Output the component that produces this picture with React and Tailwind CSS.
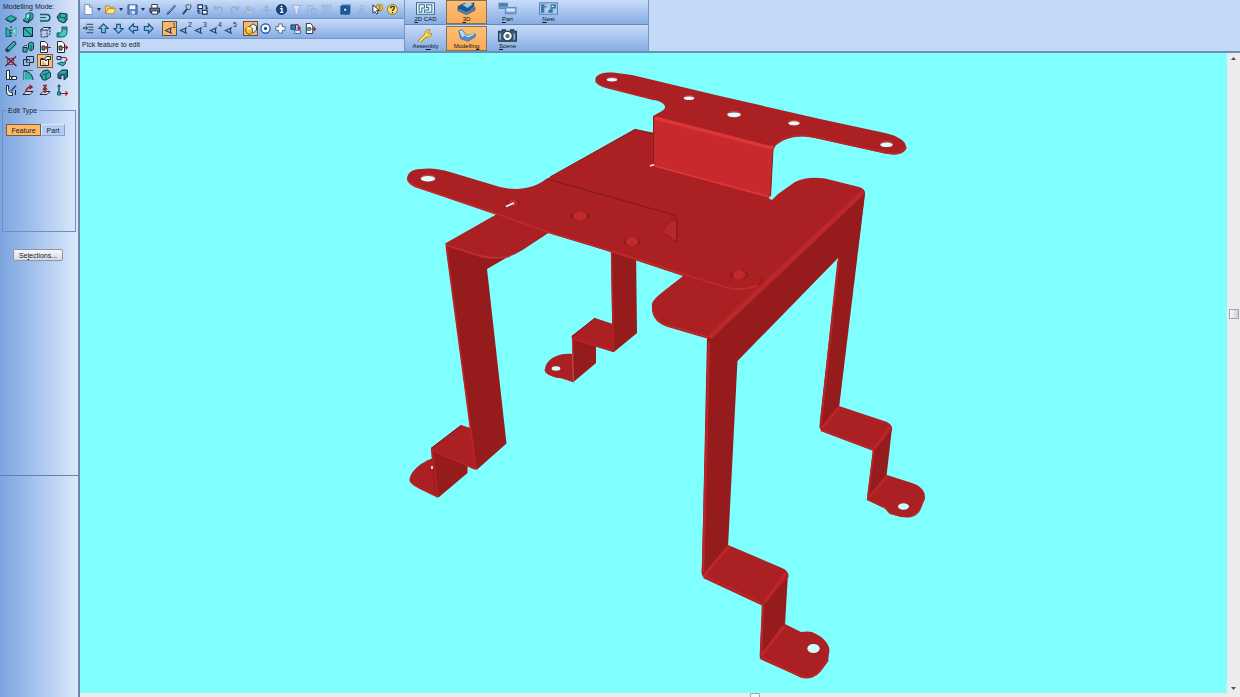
import React from "react";

const T = "#2fb3a8";
const TD = "#0d5f66";
const K = "#1d2b3a";
const R = "#a3162b";

function Icon({ children, className = "w-3 h-3" }) {
  return (
    <svg viewBox="0 0 12 12" className={className + " shrink-0"} fill="none" aria-hidden="true">
      {children}
    </svg>
  );
}

/* ---------- modelling mode palette ---------- */
const modes = [
  ["Flat plate", <><path d="M0.5 6.5 6 3.5l5.5 2.5L6 9.5z" fill={T} stroke={TD} /><path d="M.5 7.5 6 10.5l5.5-3.5" stroke={K} /></>],
  ["Plate with flange", <><path d="M1 8 4 6V2l4-1.500L11 2v4L6 10z" fill={T} stroke={TD} /><path d="M4.500 2.500 8 1.500v4L4.500 6z" fill="#8ee6dc" /><path d="M8 1.500v4.500l-2 3M1 8.500 6 11l5-4.500" stroke={K} /></>],
  ["Hem", <><path d="M1 2.500h6.500c4.500 0 4.500 6.500 0 6.500H1" stroke={TD} strokeWidth="1.600" /><path d="M1 5.500h6" stroke={TD} /><path d="M1 7.500h7" stroke="#6fd6cb" /></>],
  ["Box", <><path d="M1 5 4 1l7 1v6l-3 3-5-2z" fill={T} stroke={K} /><path d="M4 1v4l5 1 2-4M9 6v5M1 5l3 1" stroke={TD} /></>],
  ["Mirror", <><path d="M1 1.500 5 5v5.500H1z" fill={T} stroke={TD} /><path d="M6 0v12" stroke={K} strokeDasharray="2 1" /><path d="M11 1.500 7 5l4 5.500z" fill="#9be0da" stroke={T} /></>],
  ["Diagonal bend", <><path d="M1.500 1.500h9v9h-9z" fill={T} stroke={K} /><path d="m1.500 1.500 9 9" stroke={K} /></>],
  ["Wire box", <><path d="M2 4.500V11h6V4.500M8 11l3-3V1.500" stroke={K} strokeDasharray="2 1" /><path d="m1.500 4 3-2.500h7L8.500 4z" fill="#d7f4f0" stroke={K} /></>],
  ["Curved duct", <><path d="M6 1h5v5c0 3-2 5-5 5H1V7h2c2 0 3-1 3-3z" fill="#44c9bf" stroke={TD} /><path d="M6 1.500 7.500 3H11M1 7l2 1v3" stroke={TD} /></>],
  ["Tube", <><path d="m2.500 9 6.500-6.500" stroke={K} strokeWidth="4.500" strokeLinecap="round" /><path d="m2.500 9 6.500-6.500" stroke={T} strokeWidth="3" strokeLinecap="round" /><circle cx="2.500" cy="9" r="1.200" fill={K} /></>],
  ["Join parts", <><path d="M1 6.500h4V11H1z" fill={T} stroke={K} /><path d="M6.500 2.500 9 1l2.500 1v6L9 10 6.500 8z" fill={T} stroke={K} /><path d="m1 6.500 1.500-2H5M9 4v6" stroke={TD} /></>],
  ["Import part", <><path d="M1.500.500H6L8.500 3v8.500h-7z" fill="#fff" stroke={K} /><path d="M3 5h3v4H3z" fill="#5e9c57" stroke={K} /><path d="M12 6.500H7M9 4.500 7 6.500l2 2" stroke={R} strokeWidth="1.200" /></>],
  ["Export part", <><path d="M1.500.500H6L8.500 3v8.500h-7z" fill="#fff" stroke={K} /><path d="M3 5h3v4H3z" fill="#5e9c57" stroke={K} /><path d="M6.500 6.500h5M9.500 4.500l2 2-2 2" stroke={R} strokeWidth="1.200" /></>],
  ["Delete", <><path d="M2.500 3.500h6v6h-6z" stroke="#4c5f72" /><path d="m.500 1.500 11 9.500M11 1.500.500 11" stroke="#8f1223" strokeWidth="1.500" /></>],
  ["Copy", <><path d="M4.500 1.500h7v6h-7z" stroke={K} /><path d="M1.500 4.500h6v6h-6z" stroke={K} /><path d="M5 5h2.500v2.500H5z" fill="#d8e7fb" stroke="#4a617a" /></>],
  ["Edit feature", <><path d="M1.500 4.500h8v6h-8z" fill="#fff3d4" stroke={K} /><path d="M1.500 3.500h3" stroke={K} /><path d="M5.500 4 7.500 1.500h4v3H8L7 6z" fill="#e8edf2" stroke={K} /><path d="M3 7h2M3 9h4" stroke="#a37a3d" /></>],
  ["Rotate feature", <><path d="M4 2.500h4.500c3 0 3 4 0 4" stroke={R} strokeWidth="1.200" /><path d="M1 1.500h4v3H1z" stroke={K} /><path d="M1.500 8.500 5 7l5 1-3 3z" fill={T} stroke={TD} /></>],
  ["Align", <><path d="M1.500 1.500h3v9h-3z" fill="#fff" stroke={K} /><path d="M4.500 7.500h2v3h-2zM7 7.500h4.500v3H7z" fill="#fff" stroke={K} /></>],
  ["Corner round", <><path d="M2.500 2.500c5 0 8 3 8 8h-8z" fill={T} /><path d="M1.500 11V1.500H11" stroke="#49738e" /><path d="M2 2c5.500.500 8.500 4 9 9" stroke={K} /></>],
  ["Solid", <><path d="m1 6 3-4 5-1 2.500 3v4L7 11H4z" fill={T} stroke={K} /><path d="M4 6 9 4l2-1M7 5v6M1 6l3 2" stroke={TD} strokeWidth="1.300" /></>],
  ["Shell", <><path d="M2 4.500 6 1h5.500v7L8 11V6H5v4L2 9z" fill="#187e7e" stroke={K} /><path d="M2.500 4.500 6 2h5L8 4.500z" fill={T} /></>],
  ["Sketch", <><path d="M1.500 1.500h2v4c0 2 1 3 4 3v3H5c-2.500 0-3.500-2-3.500-4z" fill="#e9f2ff" stroke={K} /><path d="m6 7 5-5.500" stroke="#2b4f96" strokeWidth="1.800" /><path d="M10.500 6v5" stroke={K} /></>],
  ["Bend up", <><path d="M1 10.500 4 7.500h7L8 10.500z" fill="#e7d5d8" stroke={K} /><path d="M4 8C4 4.500 6 3 9.500 3M7.500 1l2.500 2-2.500 2" stroke={R} strokeWidth="1.500" /></>],
  ["Push feature", <><path d="M1 10.500 4 7.500h7L8 10.500z" fill="#e7d5d8" stroke={K} /><path d="M6 9V2M4 6l2-3 2 3M4 1.500h4" stroke="#8d2a28" strokeWidth="1.500" /></>],
  ["Set origin", <><path d="M3 1v8" stroke={TD} strokeWidth="1.500" /><path d="m1.500 3 1.500-2.500L4.500 3" stroke={TD} /><path d="M5 9.500h6M9.500 7.500l2 2-2 2" stroke={R} strokeWidth="1.200" /><path d="M1.500 8h3v3h-3z" fill={T} stroke={TD} /></>],
];

/* ---------- toolbar glyphs ---------- */
const faded = "#9aafcf";
const g = {
  newFile: <><path d="M2 .500h5L10 3.500v8H2z" fill="#fff" stroke="#6f8cb8" /><path d="M7 .500v3h3" stroke="#6f8cb8" /></>,
  open: <><path d="M.500 10.500V2h3.500l1 1.500h4V5" fill="#f6d55b" stroke="#b98d20" /><path d="m1 10.500 2-5.500h8.500l-2 5.500z" fill="#ffe680" stroke="#b98d20" /></>,
  save: <><path d="M1 1h10v10H1z" fill="#5d86c6" stroke="#3c609c" /><path d="M3 1.500h6v4H3z" fill="#eef5ff" /><path d="M3.500 7.500h5V11h-5z" fill="#d6e4f6" /><path d="M4.500 8v2.500" stroke="#27508b" /></>,
  print: <><path d="M3 4V.500h6V4" fill="#fff" stroke={K} /><path d="M1 4.500h10.500V9H1z" fill="#69778b" stroke={K} /><path d="M3 7.500h6.500V11H3z" fill="#fff" stroke={K} /></>,
  pencil: <><path d="m2 10.500 8-9" stroke="#234c8c" strokeWidth="2.400" /><path d="m2.500 9.500 7-8" stroke="#a9cbf1" /><path d="m1 11.500 2-1.500" stroke={K} /></>,
  tools: <><path d="m2 11 5-6" stroke="#26426b" strokeWidth="2" /><path d="M5 2l2-1.500h3L11 3 9.500 6H7z" fill="#b8cee9" stroke="#2d4c76" /><path d="M7 3 9.500.500" stroke="#e6b63a" strokeWidth="1.500" /></>,
  convert: <><path d="M1 1h5v4H1zM6 7h5v4H6z" fill="#fff" stroke="#1c3158" strokeWidth="1.300" /><path d="M8 2h2.500v3M9 4l1.500 1.500L12 4M4 10H1.500V7M0 8l1.500-1.500L3 8" stroke="#264d84" strokeWidth="1.200" /></>,
  undo: <path d="M2 2v4h4M2.500 5.500C5 2 10 3 10 7c0 2-1 3.500-3 4" stroke={faded} strokeWidth="1.900" />,
  redo: <path d="M10 2v4H6M9.500 5.500C7 2 2 3 2 7c0 2 1 3.500 3 4" stroke={faded} strokeWidth="1.900" />,
  hand: <><path d="M3 11 1.500 7l2-1L3 3l2-.500L8 5l2.500 1-1 5z" fill="#afc1dc" stroke={faded} /><path d="M4 5l3 3" stroke="#7e93b6" /></>,
  move: <><path d="M6 1v10M1 7h10" stroke={faded} strokeWidth="1.500" /><path d="m3.500 4 2.500-3 2.500 3z" fill={faded} /></>,
  info: <><circle cx="6" cy="6" r="5.500" fill="#1a477e" stroke="#102f58" /><path d="M4.500 5H6.500v4M4.500 9.200h3.500" stroke="#fff" strokeWidth="1.500" /><circle cx="6" cy="2.700" r="1" fill="#fff" /></>,
  filter: <><path d="M1 1.500h10L7.500 6v5h-3V6z" fill="#dce7f7" stroke={faded} /></>,
  flag: <><path d="M2 1v10M2 2h6v4H2M6 5h5v5H6z" stroke={faded} /></>,
  rows: <path d="M1 1.500h10v2H1zM1 5.500h10M1 8.500h10v2H1z" stroke={faded} />,
  cube: <><path d="M1 2h9.500v9H1z" fill="#1f62a5" stroke="#173c69" /><path d="M4 4.500h3.500V8H4z" fill="#d9edff" stroke="#0a3262" /><path d="M1 2 3 .500h8.500V9l-1 2" stroke="#5ea1d8" /></>,
  wrenchOff: <><path d="m2 11 4-5 4 5" stroke={faded} strokeWidth="1.700" /><circle cx="6.500" cy="3.500" r="2.200" stroke={faded} /></>,
  cursorHelp: <><circle cx="8" cy="4" r="3.800" fill="#f1cf49" stroke="#a98020" /><path d="M1 1v9l2-2 2 3 1.500-1L5 7h3z" fill="#fff" stroke={K} /><path d="M7 3c1-2 3 0 1.500 1.200V6" stroke="#5e4713" /></>,
  help: <><circle cx="6" cy="6" r="5.500" fill="#ffdf59" stroke="#8c7026" /><path d="M4 4.500C4 2 8.500 2 8 4.500 7.500 6 6 6 6 7.500" stroke={K} strokeWidth="1.400" /><circle cx="6" cy="9.500" r=".900" fill={K} /></>,
  tree: <><path d="M4 1.500h7M6 4.500h5.500M6 7.500h5.500M4 10.500h7" stroke="#46617a" strokeWidth="1.600" /><path d="M0 5.500h5M3 3.500l2 2-2 2" stroke="#2b735b" strokeWidth="1.300" /><path d="M0 5.500h2" stroke={R} strokeWidth="1.300" /></>,
  up: <path d="m6 1 5 5H8v4.500H4V6H1z" fill="#8fc6f3" stroke="#245386" strokeWidth="1.300" />,
  down: <path d="M6 11 1 6h3V1.500h4V6h3z" fill="#8fc6f3" stroke="#245386" strokeWidth="1.300" />,
  left: <path d="m1 6 5-5v3h4.500v4H6v3z" fill="#8fc6f3" stroke="#245386" strokeWidth="1.300" />,
  right: <path d="M11 6 6 1v3H1.500v4H6v3z" fill="#8fc6f3" stroke="#245386" strokeWidth="1.300" />,
  solid: <><path d="M5 3 8 .800 11.500 3v4l-3 3L5 8z" fill="#e8edf2" stroke="#25466c" /><path d="M.800 5.500 4 3.500 7.500 5.500v4L4 11.500.800 9z" fill="#f7bf28" stroke="#7c581b" /><ellipse cx="4" cy="5.500" rx="2.500" ry="1.300" fill="#fff4b2" /></>,
  target: <><circle cx="6" cy="6" r="5" fill="#eff7ff" stroke="#1f4d84" strokeWidth="1.300" /><circle cx="6" cy="6" r="1.800" fill="#225993" /></>,
  cross: <path d="M4 1h4v3h3v4H8v3H4V8H1V4h3z" fill="#f8fbff" stroke="#4f6788" />,
  dxf: <><path d="M1 2h5v5H1z" fill="#317ba8" stroke="#1d3c65" /><path d="M6 1.500c4 0 4 2 4 5M8.500 5 10 7l1.500-2" stroke={R} strokeWidth="1.300" /><path d="M5 8h6.500v3.500H5z" fill="#dceaff" stroke="#3c6291" /></>,
  exportDoc: <><path d="M1.500.500H6L8.500 3v8.500h-7z" fill="#fff" stroke={K} /><path d="M3 5h3v3H3z" fill="#62bd9f" stroke="#286e55" /><path d="M7 6.500h4.500M9.500 4.500l2 2-2 2" stroke={R} strokeWidth="1.200" /></>,
};

function Tool({ name, icon, wide, active }) {
  return (
    <button
      type="button"
      aria-label={name}
      className={
        (wide ? "w-4 " : "w-[15px] ") +
        "flex h-[15px] shrink-0 items-center justify-center " +
        (active ? "border border-[#5a5348] bg-[#f9b767]" : "")
      }
    >
      <Icon className={icon === "solid" ? "h-3 w-3" : "h-[11px] w-[11px]"}>{g[icon]}</Icon>
    </button>
  );
}

function Drop({ name }) {
  return (
    <button type="button" aria-label={name} className="flex h-[15px] w-1.5 shrink-0 items-center justify-center">
      <svg viewBox="0 0 4 3" className="h-[3px] w-1" aria-hidden="true"><path d="M0 0h4L2 3z" fill="#24364f" /></svg>
    </button>
  );
}

function ViewButton({ n }) {
  return (
    <button
      type="button"
      aria-label={"View " + n}
      aria-pressed={n === 1}
      className={
        "relative flex h-[15px] w-[15px] shrink-0 items-center justify-center " +
        (n === 1 ? "border border-[#5a5348] bg-[#f9b767]" : "")
      }
    >
      <svg viewBox="0 0 12 12" className="h-3 w-3" fill="none" aria-hidden="true">
        <path d="M8 4.500 1.500 7.500 8 10.500M6.500 5.500v4" stroke="#25446d" strokeWidth="1.200" />
      </svg>
      <span className="absolute right-0 top-0 text-[7px] leading-[8px] text-[#152a4a]">{n}</span>
    </button>
  );
}

/* ---------- module tabs ---------- */
const m = {
  cad: <><rect x=".500" y=".500" width="17" height="11" fill="#e9f4ff" stroke="#3b7292" /><path d="M3 2.500h5v3H5.500v4H3zM10 2.500h5v7H8v-2h4V5h-2z" stroke="#3b7292" /></>,
  three: <><path d="M1 4 7 1l4 2 5-2.500V4l-7 5-8-3z" fill="#1e5792" stroke="#1e456f" strokeWidth=".700" /><path d="M5 2.500 10 .500l5 1.500-5 3.500z" fill="#9cc7ec" /><path d="M1 5.500 9 9l8-4v2.500L9 11.800 1 8z" fill="#4b8ccc" stroke="#1e456f" strokeWidth=".700" /></>,
  part: <><path d="M1 1h8v4h8v6H7V6H1z" fill="#6d9fd3" stroke="#658bb5" /><path d="M1 1h8v3H1z" fill="#4e7fb5" /><path d="M8 6h8v3H8z" fill="#d4e8fa" /></>,
  nest: <><path d="M.500.500h17v11H.500z" fill="#a8c9ea" stroke="#5d86b4" /><path d="M2 2h5v3H5v5H2zM11 2h5v4h-3v4H9V7h2z" fill="#3f74ab" /><path d="M7 7h2M5 3h2M12 4h2" stroke="#e9f6ff" /></>,
  assembly: <><path d="m4 11 6-6" stroke="#a97d13" strokeWidth="3.500" strokeLinecap="round" /><path d="M9.500 1.500c1.500-1.500 3-1.500 4-1L11.500 3l1 1.500 2.500-.500c0 3-3 4.500-5 3.500C8 6.500 8 3.500 9.500 1.500z" fill="#f6ce40" stroke="#a97d13" strokeWidth=".700" /><path d="m4 11 6-6" stroke="#fbdc61" strokeWidth="2.200" strokeLinecap="round" /></>,
  modelling: <><path d="M1.500 1.500 5 .500 8 5l2.500 1L16 4l1.500 1v2l-7 4.500L3.500 9z" fill="#4f8cc8" stroke="#3c6d9d" strokeWidth=".700" /><path d="M2 1.800 5 1l3 4.500L5 8z" fill="#b9dbf7" /><path d="m8 6 2.500 1L16 4.500" stroke="#d4eaff" strokeWidth="1.200" /></>,
  scene: <><path d="M1 2h3V.500h3V2h5V.500h3V2h2.500v9.500H.500V2z" fill="#385f7c" stroke="#203d52" /><path d="M2 4v6M15.500 4v6" stroke="#8db0c5" strokeWidth="1.500" /><circle cx="9" cy="6.500" r="4.500" fill="#f2f7f9" stroke="#243c4a" /><circle cx="9" cy="6.500" r="2" fill="#4c6d79" /></>,
};

function ModuleTab({ icon, pre, hot, post, active }) {
  return (
    <button
      type="button"
      aria-pressed={!!active}
      className={
        "flex h-full w-[41px] flex-col items-center justify-end border " +
        (active ? "border-[#80715f] bg-linear-to-b from-[#fdc173] to-[#f9a955]" : "border-transparent")
      }
    >
      <svg viewBox="0 0 18 12" className="h-[13px] w-[19px] shrink-0" fill="none" aria-hidden="true">{m[icon]}</svg>
      <span className="whitespace-nowrap text-[6px] leading-[8px] text-[#0c1420]">{pre}<u>{hot}</u>{post}</span>
    </button>
  );
}

/* ---------- bracket model ---------- */
const TOP = "#ab2022";
const SIDE = "#951b1c";
const FACE = "#c8292c";
const EDGE = "#bb2427";
const BG = "#80ffff";

function Hole({ x, y, rx, ry }) {
  return (
    <>
      <ellipse cx={x} cy={y - 0.5} rx={rx} ry={ry + 0.8} fill="#c64043" />
      <ellipse cx={x} cy={y + 0.3} rx={rx - 0.3} ry={ry} fill="#d9ffff" />
    </>
  );
}

function BlindHole({ x, y, r }) {
  return (
    <>
      <ellipse cx={x} cy={y} rx={r} ry={r / 2} fill="#941b1c" />
      <ellipse cx={x} cy={y} rx={r * 0.68} ry={r / 2} fill="#bf292b" />
    </>
  );
}

function BracketModel() {
  return (
    <svg viewBox="80 53 1147 640" className="block h-full w-full" fill="none" role="img" aria-label="Sheet metal bracket" strokeLinejoin="round">
      {/* rear left leg */}
      <path d="M572 354C562 353 553 356 548 362 544 367 544 372 549 375L556 377.500 562 378 573 381.500z" fill={TOP} />
      <path d="M545 369C545 373 548 374 556 377l6 1 12 4" stroke={EDGE} strokeWidth="1.200" />
      <ellipse cx="556" cy="368.500" rx="4.300" ry="2.200" fill="#cfffff" />
      <path d="M572 338 596 344V363L574 381.500z" fill={SIDE} />
      <path d="M595 318 613 324V352L572 339 571.500 336z" fill={TOP} />
      <path d="M595 318 572 336.500" stroke="#7d1718" />
      <path d="M573 381V339L613 351" stroke={EDGE} strokeWidth="1.500" />
      <path d="M611 248H636L637 333 614 352H612.500z" fill={SIDE} />
      <path d="M611.500 248 613.500 351" stroke={EDGE} strokeWidth="1.500" />

      {/* front left leg */}
      <path d="M432 458.500C420 463 411 471 409.500 479 410 483 414 486 438 497.500z" fill={TOP} />
      <path d="M410 480C411 484 416 487 438 497" stroke={EDGE} strokeWidth="1.400" />
      <path d="M431 450 467.500 461V473L438.500 497.500 435 492z" fill={SIDE} />
      <path d="M461 425 472 428.500 477 470 431 450.500V448z" fill={TOP} />
      <path d="M461 425.500 431 448.500" stroke="#7d1718" />
      <path d="M438 497 432 450 475 469" stroke={EDGE} strokeWidth="1.500" />
      <path d="M432 466v3" stroke="#d9ffff" strokeWidth="1.600" />
      <path d="M445.500 243 510 250 506 258 487 269 506.500 443.500 476.500 470 475 464z" fill={SIDE} />
      <path d="M446.500 247 476 469" stroke={EDGE} strokeWidth="1.800" />

      {/* rear right leg */}
      <path d="M887 475 912 483C921 486 925 491 925 497L920 509C916 516 908 518 900 516.500L890 514 885 508.500 867 500 868 496z" fill={TOP} />
      <path d="M867 499 885 507.500 890 513 900 516C909 518 917 516 920 509L924.500 498" stroke={EDGE} strokeWidth="1.600" />
      <ellipse cx="903.500" cy="506.500" rx="5.500" ry="3.200" fill="#c9ffff" />
      <path d="M892 428 886.500 476 867 500 873 449z" fill={SIDE} />
      <path d="M865 194 839 408 822 431Q819 430 820 420L838.500 256z" fill={SIDE} />
      <path d="M838.500 260 820.500 428" stroke={EDGE} strokeWidth="2.200" />
      <path d="M839 406 887 422Q893 425 892 430L874 451 821 431z" fill={TOP} />
      <path d="M839 407 822 428M890 427 875 448M887 476 869 497" stroke="#bd2729" strokeWidth="2.400" />
      <path d="M821 430 874 450 868 497" stroke={EDGE} strokeWidth="2" />

      {/* front right leg */}
      <path d="M785 624 801 632C807 631 812 631 816 634 824 638 829 644 829.500 650L828 661 820 671C815 677 808 679 801 677.500L760 659z" fill={TOP} />
      <path d="M761 657 801 676.500C809 679 816 676 820 671L828 660" stroke={EDGE} strokeWidth="2" />
      <ellipse cx="813.500" cy="648.500" rx="6.200" ry="4.600" fill="#c9ffff" />
      <path d="M788 573 785 625 760 659Q759 655 763 603z" fill={SIDE} />
      <path d="M707 338 737.500 360 728 547 703 577Q701 574 702 566z" fill={SIDE} />
      <path d="M709 341 703 573" stroke={EDGE} strokeWidth="2.600" />
      <path d="M728 545 782 568Q789 571 788.500 577L763 606 703 578z" fill={TOP} />
      <path d="M729 546 705 574M786 573 765 602M784 626 762 655" stroke="#bd2729" strokeWidth="3" />
      <path d="M703 575 763 604 761 656" stroke={EDGE} strokeWidth="2.400" />

      {/* table plate */}
      <path d="M635 129 655 133 771 199 795 182C805 177 815 177 825 178.500L859 187Q866 189 865 195L712 338 667 325C655 321 651 313 652 304 654 298 660 294 683 276L550 232 527 247C514 256 500 262 484 258L445.500 246 446 243 497 214 550 177z" fill={TOP} />
      <path d="M446 245 480 256C497 259 503 258 510 256" stroke="#c22c2e" strokeWidth="1.800" />
      <path d="M653 310C654 319 661 324 668 326L709 338" stroke={EDGE} strokeWidth="2" />
      <path d="M865 192 859 240 839 257 737.500 361 707 341Q707 336 712 334z" fill={SIDE} />
      <path d="M862 193 711 336" stroke="#bd2729" strokeWidth="5" strokeLinecap="round" />
      <path d="M550 177 635 129.500 653 134" stroke="#8d1b1c" />

      {/* near flange */}
      <path d="M421 169C430 167.500 440 169 450 172L500 187C517 191 533 189 546 179L549 178 676 215 762 281 757 286C748 291 737 291 725 287.500L611 252 548 233 497 215 417 187.500C409 185 405 180 408 175 410 171 415 169 421 169z" fill={TOP} />
      <path d="M408 180C410 184 413 186 420 188L497 214 548 232 611 251 680 273 725 287C740 291 750 290 758 284" stroke="#c22a2d" strokeWidth="1.800" />
      <path d="M547 179 674 215Q677 217 677 221V242" stroke="#7e1718" />
      <path d="M757 285Q763 282 762 277" stroke="#851819" />
      <path d="M676.500 219C668 221 664 227 663 233L676.500 242z" fill="#b82729" stroke="#8a191a" strokeWidth=".800" />
      <Hole x={428} y={178.500} rx={7.500} ry={2.800} />
      <BlindHole x={513} y={203} r={7} />
      <path d="M506 206.500 514 203" stroke="#dfffff" strokeWidth="1.800" />
      <BlindHole x={580} y={216} r={10} />
      <BlindHole x={632} y={241.500} r={9} />
      <BlindHole x={739} y={275} r={9.500} />

      {/* upright flange */}
      <path d="M613 72.500 632 75 720 96 820 119 885 133C899 136 907 142 906 148 904 154 896 155.500 885 153.500L815 138C800 134 785 137 776 145L772 152 653 120V116L662 111C668 107 665 103 655 100L605 87C597 85 594 81 596 77 599 73 606 72 613 72.500z" fill={TOP} />
      <path d="M596 81C598 84 601 86 608 87.500L655 99.500M776 144C785 136 800 133.500 815 137L885 152.500C896 155 904 153 906 147" stroke={EDGE} strokeWidth="2.200" />
      <path d="M653 117 773 149 770.500 198 653 166z" fill={FACE} />
      <path d="M655 118 768 147Q771 148 773 146" stroke="#dd3639" strokeWidth="3.500" />
      <path d="M653 165.500 770 197" stroke="#dd373a" strokeWidth="1.800" />
      <path d="M653.500 117V165M773 149 770.500 197" stroke="#8d1b1c" />
      <path d="M650 166 654 164.500" stroke="#f0e7cf" strokeWidth="1.500" />
      <path d="M769 198.500 770.500 196 777 195 772 200z" fill={BG} />
      <Hole x={612} y={79.500} rx={5.500} ry={1.700} />
      <Hole x={689} y={98} rx={5.500} ry={1.800} />
      <Hole x={734} y={114.500} rx={7} ry={2.400} />
      <Hole x={794} y={123} rx={6} ry={2} />
      <Hole x={886.500} y={144.500} rx={6.500} ry={2.300} />
    </svg>
  );
}

const bar = "bg-linear-to-b from-[#c9dcf8] to-[#86ace4]";

export default function App() {
  return (
    <div className="flex h-screen w-full overflow-hidden bg-[#c4d8f8] font-['Liberation_Sans',Arial,sans-serif] text-[7px] leading-[9px] text-[#17202c]">
      <aside className="flex w-20 shrink-0 flex-col border-r-2 border-[#6d87a8] bg-linear-to-r from-[#7ba4df] via-[#aac6ef] to-[#dce9fb]">
        <div className="flex h-[476px] flex-col border-b border-[#6580a6]">
          <h2 className="pl-[3px] pt-0.5">Modelling Mode:</h2>
          <div className="ml-[3px] grid h-[86px] w-[67px] grid-cols-4 grid-rows-6">
            {modes.map(([name, drawing]) => (
              <button
                key={name}
                type="button"
                aria-label={name}
                className={
                  "flex items-center justify-center " +
                  (name === "Edit feature" ? "border border-[#776142] bg-[#fbbd70]" : "")
                }
              >
                <Icon>{drawing}</Icon>
              </button>
            ))}
          </div>
          <fieldset className="mx-0.5 mt-[9px] h-[126px] border border-[#6d8fc4] px-[3px]">
            <legend className="px-0.5">Edit Type</legend>
            <div className="mt-[9px] flex">
              <button type="button" aria-pressed="true" className="h-3 w-[35px] border border-[#735f45] bg-[#fdb964] leading-none">Feature</button>
              <button type="button" aria-pressed="false" className="h-3 w-6 border border-[#85a1cc] border-l-[#d9e7fb] border-t-[#d9e7fb] bg-[#b3ccf2] leading-none">Part</button>
            </div>
          </fieldset>
          <button type="button" className="ml-[13px] mt-[17px] h-3 w-[50px] shrink-0 rounded-xs border border-[#8b95a3] bg-linear-to-b from-[#f7f8fa] to-[#d5dae2] leading-none">
            Se<u>l</u>ections...
          </button>
        </div>
      </aside>

      <div className="flex min-w-0 flex-1 flex-col">
        <header className="flex h-[53px] shrink-0 border-b-2 border-[#6c93ad]">
          <div className="flex w-[325px] shrink-0 flex-col border-r border-[#7395cb]">
            <div className={"flex h-[19px] items-center border-b border-[#7395cb] " + bar}>
              <Tool wide name="New" icon="newFile" /><Drop name="New options" />
              <Tool wide name="Open" icon="open" /><Drop name="Open options" />
              <Tool wide name="Save" icon="save" /><Drop name="Save options" />
              <Tool wide name="Print" icon="print" />
              <div className="ml-px flex">
                <Tool wide name="Draw" icon="pencil" />
                <Tool name="Tools" icon="tools" />
                <Tool wide name="Convert" icon="convert" />
                <Tool wide name="Undo" icon="undo" />
                <Tool wide name="Redo" icon="redo" />
                <Tool name="Pan" icon="hand" />
              </div>
              <div className="ml-0.5 flex">
                <Tool name="Move" icon="move" />
                <Tool name="Information" icon="info" />
                <Tool name="Filter" icon="filter" />
                <Tool name="Flag" icon="flag" />
                <Tool name="List" icon="rows" />
              </div>
              <div className="ml-1 flex">
                <Tool name="Solid view" icon="cube" />
                <Tool wide name="Settings" icon="wrenchOff" />
                <Tool wide name="Context help" icon="cursorHelp" />
                <Tool name="Help" icon="help" />
              </div>
            </div>
            <div className={"flex h-5 items-center gap-1.5 border-b border-[#7395cb] pl-px " + bar}>
              <div className="flex">
                <Tool name="Feature tree" icon="tree" />
                <Tool name="Up" icon="up" />
                <Tool name="Down" icon="down" />
                <Tool name="Left" icon="left" />
                <Tool name="Right" icon="right" />
              </div>
              <div className="flex">{[1, 2, 3, 4, 5].map((n) => <ViewButton key={n} n={n} />)}</div>
              <div className="flex">
                <Tool name="Shaded" icon="solid" active />
                <Tool name="Centre" icon="target" />
                <Tool name="Fit" icon="cross" />
                <Tool name="Export DXF" icon="dxf" />
                <Tool name="Export document" icon="exportDoc" />
              </div>
            </div>
            <p className="pl-0.5 pt-px">Pick feature to edit</p>
          </div>
          <nav className="flex w-[244px] shrink-0 flex-col border-r border-[#7395cb]">
            <div className={"flex h-[25px] border-b border-[#6886b5] " + bar}>
              <ModuleTab icon="cad" hot="2" post="D CAD" />
              <ModuleTab icon="three" hot="3" post="D" active />
              <ModuleTab icon="part" hot="P" post="art" />
              <ModuleTab icon="nest" hot="N" post="est" />
            </div>
            <div className={"flex h-[26px] pt-px " + bar}>
              <ModuleTab icon="assembly" pre="Asse" hot="m" post="bly" />
              <ModuleTab icon="modelling" pre="Modellin" hot="g" active />
              <ModuleTab icon="scene" hot="S" post="cene" />
            </div>
          </nav>
        </header>

        <div className="flex min-h-0 flex-1">
          <main className="min-w-0 flex-1 bg-[#80ffff]"><BracketModel /></main>
          <div className="flex w-[13px] shrink-0 flex-col items-center justify-between bg-[#ececee] py-0.5">
            <button type="button" aria-label="Scroll up" className="flex h-1.5 w-2 items-center justify-center">
              <svg viewBox="0 0 5 3" className="h-[3px] w-[5px]" aria-hidden="true"><path d="M0 3h5L2.500 0z" fill="#4d5358" /></svg>
            </button>
            <div className="flex w-full flex-1 justify-center pt-[248px]">
              <div className="h-2.5 w-2.5 border border-[#a2a2a8] bg-linear-to-r from-[#fafafa] to-[#cfd0d6]" />
            </div>
            <button type="button" aria-label="Scroll down" className="flex h-1.5 w-2 items-center justify-center">
              <svg viewBox="0 0 5 3" className="h-[3px] w-[5px]" aria-hidden="true"><path d="M0 0h5L2.500 3z" fill="#4d5358" /></svg>
            </button>
          </div>
        </div>
        <div className="flex h-1 shrink-0 bg-[#ececee] pl-[670px]">
          <div className="h-full w-2.5 rounded-t-xs border border-b-0 border-[#a2a2a8] bg-[#f5f5f7]" />
        </div>
      </div>
    </div>
  );
}
